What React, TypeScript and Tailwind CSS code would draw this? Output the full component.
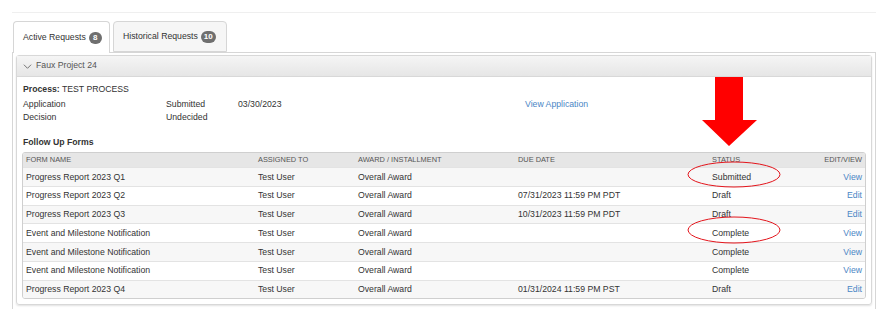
import React from 'react';

interface FormRow {
  name: string;
  assigned: string;
  award: string;
  due: string;
  status: string;
  action: string;
}

const rows: FormRow[] = [
  { name: 'Progress Report 2023 Q1', assigned: 'Test User', award: 'Overall Award', due: '', status: 'Submitted', action: 'View' },
  { name: 'Progress Report 2023 Q2', assigned: 'Test User', award: 'Overall Award', due: '07/31/2023 11:59 PM PDT', status: 'Draft', action: 'Edit' },
  { name: 'Progress Report 2023 Q3', assigned: 'Test User', award: 'Overall Award', due: '10/31/2023 11:59 PM PDT', status: 'Draft', action: 'Edit' },
  { name: 'Event and Milestone Notification', assigned: 'Test User', award: 'Overall Award', due: '', status: 'Complete', action: 'View' },
  { name: 'Event and Milestone Notification', assigned: 'Test User', award: 'Overall Award', due: '', status: 'Complete', action: 'View' },
  { name: 'Event and Milestone Notification', assigned: 'Test User', award: 'Overall Award', due: '', status: 'Complete', action: 'View' },
  { name: 'Progress Report 2023 Q4', assigned: 'Test User', award: 'Overall Award', due: '01/31/2024 11:59 PM PST', status: 'Draft', action: 'Edit' },
];

const cols = 'grid grid-cols-[232px_100px_160px_194px_100px_1fr]';

function Badge({ children }: { children: React.ReactNode }) {
  return (
    <span className="ml-[3px] inline-flex h-[12px] min-w-[13px] items-center justify-center rounded-full bg-[#6f6f6f] px-[3px] text-[8px] font-bold leading-none text-white">
      {children}
    </span>
  );
}

function Annotations() {
  return (
    <svg className="pointer-events-none absolute left-0 top-0" width="886" height="327" viewBox="0 0 886 327">
      <polygon points="715,77 743,77 743,120 757,120 729,146 702,120 715,120" fill="#ff0000" />
      <ellipse cx="734" cy="174.5" rx="46" ry="12.5" fill="none" stroke="#e3141b" strokeWidth="1" />
      <ellipse cx="734" cy="230" rx="46" ry="13" fill="none" stroke="#e3141b" strokeWidth="1" />
    </svg>
  );
}

export default function App() {
  return (
    <div className="relative h-[327px] w-[886px] overflow-hidden bg-white font-['Liberation_Sans',Arial,sans-serif] text-[8.7px] text-[#333]">
      <div className="ml-[12px] mt-[12px] w-[864px] border-t border-[#efefef] pt-[8px]">
        {/* tabs */}
        <div className="relative z-10 -mb-px flex gap-[3px] pl-[1px]">
          <div className="flex h-[32px] w-[97px] items-center rounded-t-[4px] border border-b-0 border-[#d6d6d6] bg-white pl-[9px]">
            Active Requests
            <Badge>8</Badge>
          </div>
          <div className="flex h-[31px] w-[114px] items-center rounded-t-[4px] border border-[#d6d6d6] bg-[#f6f6f6] pl-[9px]">
            Historical Requests
            <Badge>10</Badge>
          </div>
        </div>

        <div className="h-[257px] border border-b-0 border-[#d6d6d6] px-[3px] pt-[2px]">
          <div className="rounded-[3px] border border-[#d8d8d8] shadow-[0_1px_2px_rgba(0,0,0,0.12)]">
            <div className="flex h-[21px] items-center gap-[4px] border-b border-[#d8d8d8] bg-gradient-to-b from-[#f5f5f5] to-[#e6e6e6] pl-[6px] text-[#555]">
              <svg width="9" height="9" viewBox="0 0 10 10" fill="none" stroke="#666" strokeWidth="1">
                <path d="M1 3 L5 7 L9 3" />
              </svg>
              Faux Project 24
            </div>

            <div className="px-[6px] pb-[5px] pt-[6px] leading-[13px]">
              <div className="mb-[2px]">
                <span className="font-bold">Process:</span> TEST PROCESS
              </div>
              <div className="grid grid-cols-[143px_72px_287px_1fr]">
                <span>Application</span>
                <span>Submitted</span>
                <span>03/30/2023</span>
                <span className="text-[#4a86c5]">View Application</span>
                <span>Decision</span>
                <span>Undecided</span>
                <span />
                <span />
              </div>
              <div className="mt-[12px] font-bold">Follow Up Forms</div>

              <div className="mt-[3px] -mx-[1px] overflow-hidden rounded-[3px] border border-[#cfcfcf] leading-none">
                <div className={`${cols} h-[14px] items-center bg-[#e6e6e6] text-[7.4px] uppercase text-[#555]`}>
                  <span className="pl-[3px]">Form Name</span>
                  <span className="pl-[3px]">Assigned To</span>
                  <span className="pl-[3px]">Award / Installment</span>
                  <span className="pl-[3px]">Due Date</span>
                  <span className="pl-[3px]">Status</span>
                  <span className="pr-[3px] text-right">Edit/View</span>
                </div>
                {rows.map((r, i) => (
                  <div
                    key={i}
                    className={`${cols} h-[18.75px] items-center border-t border-[#e3e3e3] ${i % 2 === 0 ? 'bg-[#f7f7f7]' : 'bg-white'}`}
                  >
                    <span className="pl-[3px]">{r.name}</span>
                    <span className="pl-[3px]">{r.assigned}</span>
                    <span className="pl-[3px]">{r.award}</span>
                    <span className="pl-[3px]">{r.due}</span>
                    <span className="pl-[3px]">{r.status}</span>
                    <span className="pr-[3px] text-right text-[#4a86c5]">{r.action}</span>
                  </div>
                ))}
              </div>
            </div>
          </div>
        </div>
      </div>
      <Annotations />
    </div>
  );
}
